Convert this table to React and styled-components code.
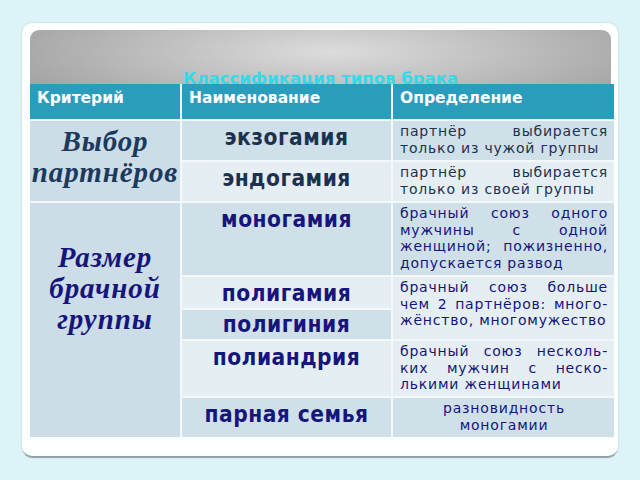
import React from "react";
import styled, { createGlobalStyle } from "styled-components";

const Global = createGlobalStyle`
  html, body { margin: 0; padding: 0; }
  body { background: #dcf3f8; }
`;

const Page = styled.div`
  width: 640px;
  height: 480px;
  box-sizing: border-box;
  padding: 23px 22px 0 22px;
  background: #dcf3f8;
`;

const Card = styled.div`
  width: 596px;
  height: 433px;
  box-sizing: border-box;
  padding: 7px 4px 19px 8px;
  background: #fdfefe;
  border-radius: 10px;
  box-shadow: 0 3px 1px -1px rgba(120, 132, 138, 0.75), 0 0 2px rgba(160, 180, 188, 0.5);
  display: flex;
  flex-direction: column;
`;

const Band = styled.div`
  height: 54px;
  margin-right: 3px;
  border-radius: 9px 9px 0 0;
  background: radial-gradient(ellipse 60% 130% at 52% 40%, #dcdcdc 0%, #c2c2c2 45%, #a2a2a2 100%);
  overflow: hidden;
  display: flex;
  align-items: flex-end;
  justify-content: center;
`;

const Title = styled.div`
  font-family: "DejaVu Sans", Verdana, sans-serif;
  font-weight: bold;
  font-size: 16.5px;
  line-height: 17px;
  color: #36d9e7;
  margin-bottom: -3px;
`;

const Table = styled.div`
  display: grid;
  grid-template-columns: 150px 209px 221px;
  grid-template-rows: 35px 39px 39px 72px 31px 29px 55px 39px;
  column-gap: 2px;
  row-gap: 2px;
  background: #f3f8fa;
`;

const Head = styled.div`
  background: #2b9dbc;
  color: #ffffff;
  font-family: "DejaVu Sans", Verdana, sans-serif;
  font-weight: bold;
  font-size: 15.5px;
  padding: 5px 7px 0;
`;

const Cell = styled.div`
  background: ${(p) => (p.$light ? "#e5eef3" : "#d0e0e9")};
  grid-row: ${(p) => p.$rows || "auto"};
  box-sizing: border-box;
`;

const Criterion = styled(Cell)`
  font-family: "Liberation Serif", "Times New Roman", serif;
  font-weight: bold;
  font-style: italic;
  font-size: 29px;
  line-height: 31px;
  letter-spacing: 0.9px;
  color: ${(p) => p.$color};
  text-align: center;
  padding-top: ${(p) => p.$top}px;
  background: #cddde7;
`;

const Name = styled(Cell)`
  font-family: "DejaVu Sans Condensed", "DejaVu Sans", Verdana, sans-serif;
  font-stretch: condensed;
  font-weight: bold;
  font-size: 22.5px;
  line-height: 26px;
  letter-spacing: 0.5px;
  color: ${(p) => p.$color};
  text-align: center;
  padding-top: ${(p) => p.$top ?? 3}px;
`;

const Def = styled(Cell)`
  font-family: "DejaVu Sans", Verdana, sans-serif;
  font-size: 14px;
  line-height: 16.5px;
  letter-spacing: 0.8px;
  color: ${(p) => p.$color};
  padding: 2px 6px 0 7px;
  text-align: ${(p) => (p.$center ? "center" : "left")};
`;

const Line = styled.span`
  display: block;
  white-space: nowrap;
  text-align: ${(p) => (p.$just ? "justify" : "inherit")};
  text-align-last: ${(p) => (p.$just ? "justify" : "auto")};
`;

const DARK = "#1c3150";
const NAVY = "#15157c";

function Lines({ lines }) {
  return lines.map((l, i) => (
    <Line key={i} $just={i < lines.length - 1}>
      {l}
    </Line>
  ));
}

export default function App() {
  return (
    <>
      <Global />
      <Page>
        <Card>
          <Band>
            <Title>Классификация типов брака</Title>
          </Band>
          <Table>
            <Head>Критерий</Head>
            <Head>Наименование</Head>
            <Head>Определение</Head>

            <Criterion $rows="span 2" $color="#1b3a5e" $top={5}>
              Выбор
              <br />
              партнёров
            </Criterion>
            <Name $color={DARK}>экзогамия</Name>
            <Def $color={DARK}>
              <Lines lines={["партнёр выбирается", "только из чужой группы"]} />
            </Def>
            <Name $light $color={DARK}>эндогамия</Name>
            <Def $light $color={DARK}>
              <Lines lines={["партнёр выбирается", "только из своей группы"]} />
            </Def>

            <Criterion $rows="span 5" $color={NAVY} $top={39}>
              Размер
              <br />
              брачной
              <br />
              группы
            </Criterion>
            <Name $color={NAVY}>моногамия</Name>
            <Def $color={NAVY}>
              <Lines
                lines={["брачный союз одного", "мужчины с одной", "женщиной; пожизненно,", "допускается развод"]}
              />
            </Def>
            <Name $light $color={NAVY}>полигамия</Name>
            <Def $light $rows="span 2" $color={NAVY}>
              <Lines lines={["брачный союз больше", "чем 2 партнёров: много-", "жёнство, многомужество"]} />
            </Def>
            <Name $color={NAVY} $top={1}>полигиния</Name>
            <Name $light $color={NAVY}>полиандрия</Name>
            <Def $light $color={NAVY}>
              <Lines lines={["брачный союз несколь-", "ких мужчин с неско-", "лькими женщинами"]} />
            </Def>
            <Name $color={NAVY}>парная семья</Name>
            <Def $center $color={NAVY}>
              <Line>разновидность</Line>
              <Line>моногамии</Line>
            </Def>
          </Table>
        </Card>
      </Page>
    </>
  );
}
